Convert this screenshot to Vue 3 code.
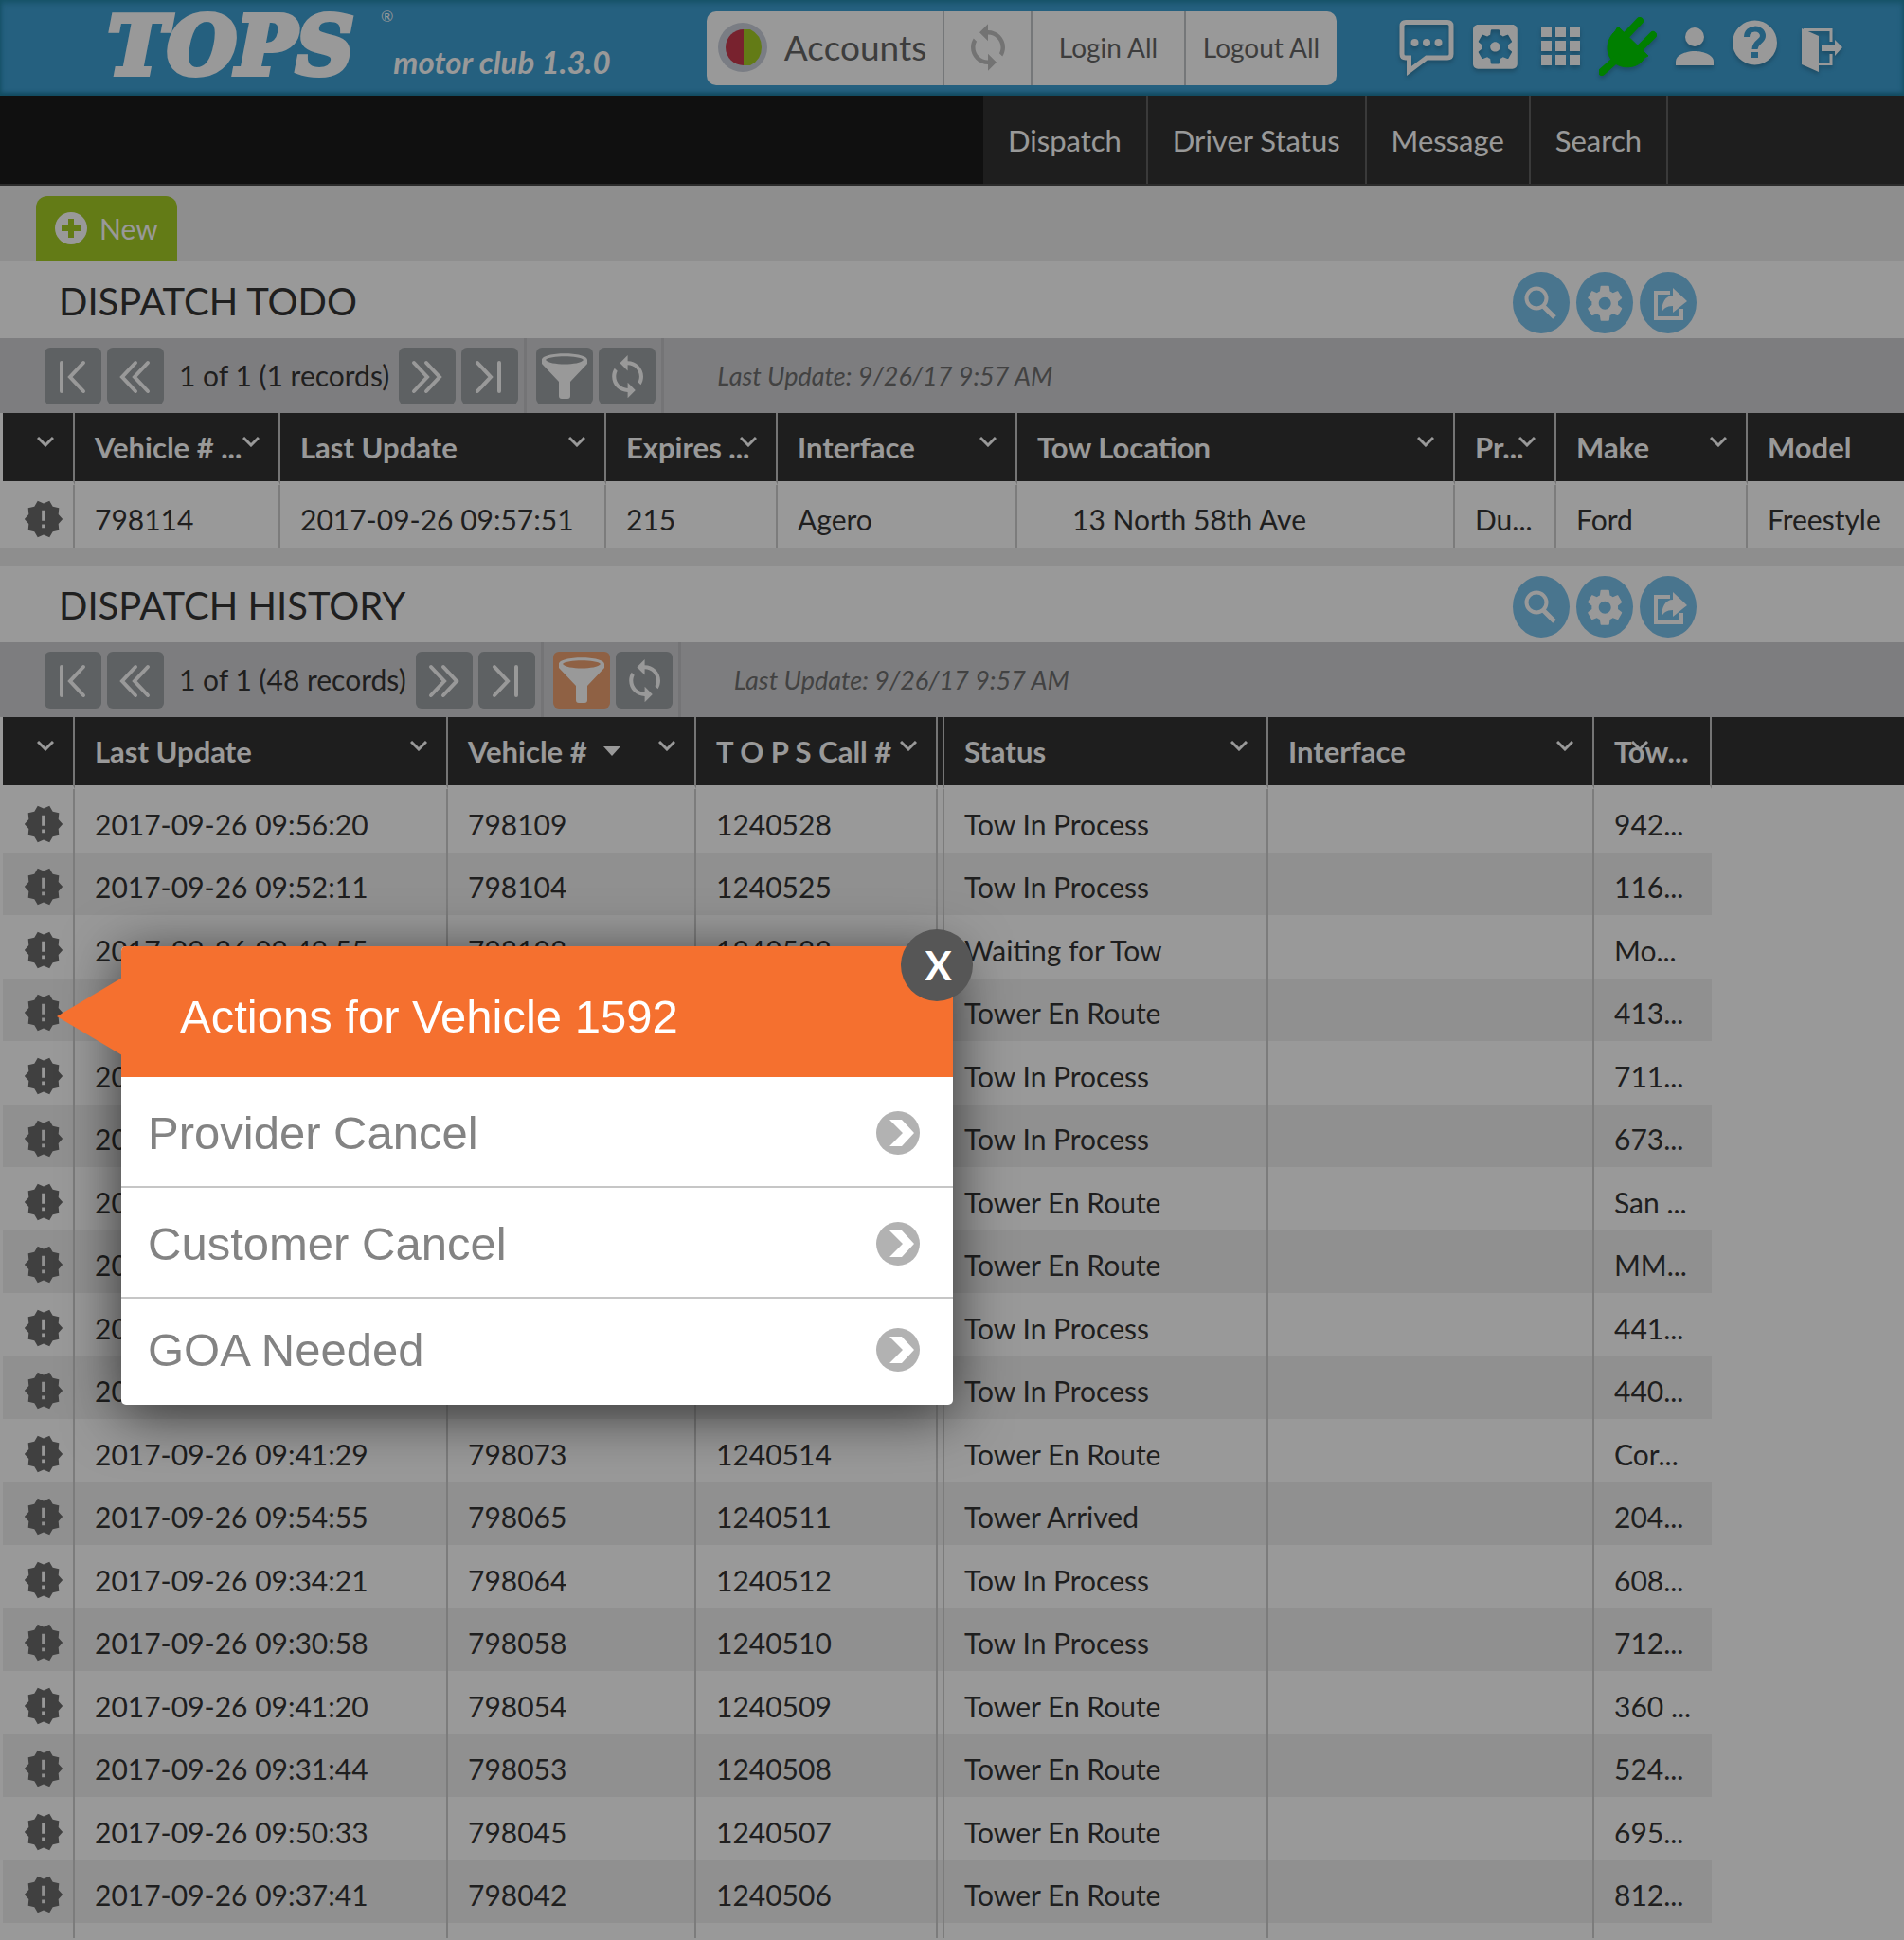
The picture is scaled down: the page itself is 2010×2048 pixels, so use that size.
<script setup>
const navItems = ['Dispatch', 'Driver Status', 'Message', 'Search']

const todoColumns = [
  { label: '', width: 76, menu: true },
  { label: 'Vehicle # ...', width: 217, menu: true },
  { label: 'Last Update', width: 344, menu: true },
  { label: 'Expires ...', width: 181, menu: true },
  { label: 'Interface', width: 253, menu: true },
  { label: 'Tow Location', width: 462, menu: true },
  { label: 'Pr...', width: 107, menu: true },
  { label: 'Make', width: 202, menu: true },
  { label: 'Model', width: 0 },
]

const todoRows = [
  ['798114', '2017-09-26 09:57:51', '215', 'Agero', '13 North 58th Ave', 'Du...', 'Ford', 'Freestyle'],
]

const historyColumns = [
  { label: '', width: 76, menu: true },
  { label: 'Last Update', width: 394, menu: true },
  { label: 'Vehicle #', width: 262, menu: true, sorted: true },
  { label: 'T O P S Call #', width: 255, menu: true },
  { label: '', width: 7 },
  { label: 'Status', width: 342, menu: true },
  { label: 'Interface', width: 344, menu: true },
  { label: 'Tow...', width: 124, menu: true, tight: true },
  { label: '', width: 0 },
]

const historyRows = [
  ['2017-09-26 09:56:20', '798109', '1240528', 'Tow In Process', '942...'],
  ['2017-09-26 09:52:11', '798104', '1240525', 'Tow In Process', '116...'],
  ['2017-09-26 09:49:55', '798103', '1240523', 'Waiting for Tow', 'Mo...'],
  ['2017-09-26 09:48:12', '798099', '1240522', 'Tower En Route', '413...'],
  ['2017-09-26 09:47:36', '798095', '1240521', 'Tow In Process', '711...'],
  ['2017-09-26 09:46:08', '798091', '1240520', 'Tow In Process', '673...'],
  ['2017-09-26 09:45:27', '798088', '1240519', 'Tower En Route', 'San ...'],
  ['2017-09-26 09:44:51', '798084', '1240518', 'Tower En Route', 'MM...'],
  ['2017-09-26 09:43:19', '798080', '1240517', 'Tow In Process', '441...'],
  ['2017-09-26 09:42:40', '798076', '1240515', 'Tow In Process', '440...'],
  ['2017-09-26 09:41:29', '798073', '1240514', 'Tower En Route', 'Cor...'],
  ['2017-09-26 09:54:55', '798065', '1240511', 'Tower Arrived', '204...'],
  ['2017-09-26 09:34:21', '798064', '1240512', 'Tow In Process', '608...'],
  ['2017-09-26 09:30:58', '798058', '1240510', 'Tow In Process', '712...'],
  ['2017-09-26 09:41:20', '798054', '1240509', 'Tower En Route', '360 ...'],
  ['2017-09-26 09:31:44', '798053', '1240508', 'Tower En Route', '524...'],
  ['2017-09-26 09:50:33', '798045', '1240507', 'Tower En Route', '695...'],
  ['2017-09-26 09:37:41', '798042', '1240506', 'Tower En Route', '812...'],
].map(([updated, vehicle, call, status, tow]) => [updated, vehicle, call, '', status, '', tow])

const panels = [
  { id: 'todo', title: 'DISPATCH TODO', paging: '1 of 1 (1 records)', columns: todoColumns, rows: todoRows, filtered: false },
  { id: 'history', title: 'DISPATCH HISTORY', paging: '1 of 1 (48 records)', columns: historyColumns, rows: historyRows, filtered: true },
]

const actions = ['Provider Cancel', 'Customer Cancel', 'GOA Needed']

const syncPath = 'M12 4V1L8 5l4 4V6c3.31 0 6 2.69 6 6 0 1.01-.25 1.97-.7 2.8l1.46 1.46C19.54 15.03 20 13.57 20 12c0-4.42-3.58-8-8-8zm0 14c-3.31 0-6-2.69-6-6 0-1.01.25-1.97.7-2.8L5.24 7.74C4.46 8.97 4 10.43 4 12c0 4.42 3.58 8 8 8v3l4-4-4-4v3z'
const gearPath = 'M19.43 12.98c.04-.32.07-.64.07-.98s-.03-.66-.07-.98l2.11-1.65c.19-.15.24-.42.12-.64l-2-3.46c-.12-.22-.39-.3-.61-.22l-2.49 1c-.52-.4-1.08-.73-1.69-.98l-.38-2.65C14.46 2.18 14.25 2 14 2h-4c-.25 0-.46.18-.49.42l-.38 2.65c-.61.25-1.17.59-1.69.98l-2.49-1c-.23-.09-.49 0-.61.22l-2 3.46c-.13.22-.07.49.12.64l2.11 1.65c-.04.32-.07.65-.07.98s.03.66.07.98l-2.11 1.65c-.19.15-.24.42-.12.64l2 3.46c.12.22.39.3.61.22l2.49-1c.52.4 1.08.73 1.69.98l.38 2.65c.03.24.24.42.49.42h4c.25 0 .46-.18.49-.42l.38-2.65c.61-.25 1.17-.59 1.69-.98l2.49 1c.23.09.49 0 .61-.22l2-3.46c.12-.22.07-.49-.12-.64l-2.11-1.65zM12 15.5c-1.93 0-3.5-1.57-3.5-3.5s1.57-3.5 3.5-3.5 3.5 1.57 3.5 3.5-1.57 3.5-3.5 3.5z'
const gearBoxPath = 'M12 10c-1.1 0-2 .9-2 2s.9 2 2 2 2-.9 2-2-.9-2-2-2zm7-7H5c-1.11 0-2 .9-2 2v14c0 1.1.89 2 2 2h14c1.11 0 2-.9 2-2V5c0-1.1-.89-2-2-2zm-1.75 9c0 .23-.02.46-.05.68l1.48 1.16c.13.11.17.3.08.45l-1.4 2.42c-.09.15-.27.21-.43.15l-1.74-.7c-.36.28-.76.51-1.18.69l-.26 1.85c-.03.17-.18.3-.35.3h-2.8c-.17 0-.32-.13-.35-.29l-.26-1.85c-.43-.18-.82-.41-1.18-.69l-1.74.7c-.16.06-.34 0-.43-.15l-1.4-2.42c-.09-.15-.05-.34.08-.45l1.48-1.16c-.03-.23-.05-.46-.05-.69 0-.23.02-.46.05-.68l-1.48-1.16c-.13-.11-.17-.3-.08-.45l1.4-2.42c.09-.15.27-.21.43-.15l1.74.7c.36-.28.76-.51 1.18-.69l.26-1.85c.03-.17.18-.3.35-.3h2.8c.17 0 .32.13.35.29l.26 1.85c.43.18.82.41 1.18.69l1.74-.7c.16-.06.34 0 .43.15l1.4 2.42c.09.15.05.34-.08.45l-1.48 1.16c.03.23.05.46.05.69z'
const badgePath = 'M23 12l-2.44-2.78.34-3.68-3.61-.82-1.89-3.18L12 3 8.6 1.54 6.71 4.72l-3.61.81.34 3.68L1 12l2.44 2.78-.34 3.69 3.61.82 1.89 3.18L12 21l3.4 1.46 1.89-3.18 3.61-.82-.34-3.68L23 12zm-10 5h-2v-2h2v2zm0-4h-2V7h2v6z'
</script>

<template>
  <div class="app">
    <header class="topbar">
      <div class="brand">
        <span class="logo">TOPS</span><sup class="reg">®</sup>
        <span class="product">motor club 1.3.0</span>
      </div>

      <div class="accounts">
        <button type="button" class="account-main">
          <svg width="52" height="52" viewBox="0 0 52 52" aria-hidden="true">
            <circle cx="26" cy="26" r="26" fill="#cbd1dd" />
            <path d="M27 7A19 19 0 0 0 27 45z" fill="#c9394d" />
            <path d="M27 7h7q12 6 12 19t-12 19h-7z" fill="#a5cd26" />
          </svg>
          Accounts
        </button>
        <button type="button" class="account-sync" aria-label="Refresh accounts">
          <svg width="54" height="54" viewBox="0 0 24 24"><path :d="syncPath" /></svg>
        </button>
        <button type="button" class="account-login">Login All</button>
        <button type="button" class="account-logout">Logout All</button>
      </div>

      <div class="tools">
        <button type="button" aria-label="Messages">
          <svg width="58" height="62" viewBox="0 0 58 62">
            <path d="M7 5.500H51q4 0 4 4V39q0 4-4 4H29L10.500 57V43H7q-4 0-4-4V9.500q0-4 4-4z" fill="none" stroke="#fff" stroke-width="5" />
            <circle cx="16.500" cy="27" r="4" /><circle cx="29" cy="27" r="4" /><circle cx="41.500" cy="27" r="4" />
          </svg>
        </button>
        <button type="button" aria-label="Settings">
          <svg width="47" height="62" viewBox="0 0 47 62"><path transform="translate(-7.800 .200) scale(2.600)" :d="gearBoxPath" /></svg>
        </button>
        <button type="button" aria-label="Applications">
          <svg width="46" height="62" viewBox="0 0 46 62">
            <path d="M5 10h11v11H5zM20 10h11v11H20zM35 10h11v11H35zM5 25h11v11H5zM20 25h11v11H20zM35 25h11v11H35zM5 40h11v11H5zM20 40h11v11H20zM35 40h11v11H35z" />
          </svg>
        </button>
        <button type="button" aria-label="Connection">
          <svg class="plug" width="61" height="62" viewBox="0 0 61 62">
            <path d="M20 10L52 41L48 43C42 55 22 56 14 46C6 37 8 23 17 15z" />
            <path d="M28 20L43 4M42 34L57 19M20 43L3 58" fill="none" stroke-width="8" stroke-linecap="round" />
          </svg>
        </button>
        <button type="button" aria-label="Profile">
          <svg width="40" height="62" viewBox="0 0 40 62"><circle cx="20" cy="21" r="10" /><path d="M0 51V47C0 39 13 36 20 36S40 39 40 47V51z" /></svg>
        </button>
        <button type="button" aria-label="Help">
          <svg width="47" height="62" viewBox="0 0 47 62">
            <circle cx="23.500" cy="27" r="23.500" />
            <path d="M15 21C15 10 32 10 32 20C32 26 23.500 26 23.500 34" fill="none" stroke="#3ea0d4" stroke-width="6" />
            <path d="M20 37h7v6h-7z" fill="#3ea0d4" />
          </svg>
        </button>
        <button type="button" aria-label="Exit">
          <svg width="49" height="62" viewBox="0 0 49 62">
            <path d="M6 12L24 20V58L6 50zM27 29H41V24L49 32L41 41V36H27z" />
            <path d="M8 13.500H37V26M37 39V49.500H24" fill="none" stroke="#fff" stroke-width="3" />
          </svg>
        </button>
      </div>
    </header>

    <nav class="nav">
      <ul>
        <li v-for="item in navItems" :key="item"><a href="#">{{ item }}</a></li>
      </ul>
    </nav>

    <div class="tabs">
      <button type="button" class="new">
        <svg width="34" height="34" viewBox="0 0 34 34" aria-hidden="true">
          <circle cx="17" cy="17" r="17" fill="#fff" />
          <path d="M17 7V27M7 17H27" stroke="#a5cd26" stroke-width="6" />
        </svg>
        New
      </button>
    </div>

    <section v-for="panel in panels" :key="panel.id" class="panel" :class="panel.id">
      <div class="panel-head">
        <h2>{{ panel.title }}</h2>
        <div class="rounds">
          <button type="button" aria-label="Search">
            <svg width="60" height="65" viewBox="0 0 60 65"><circle cx="25" cy="28" r="10.500" /><path d="M32 36L44 48" stroke-width="5" /></svg>
          </button>
          <button type="button" aria-label="Settings">
            <svg width="60" height="65" viewBox="0 0 60 65"><path class="solid" transform="translate(8 11) scale(1.850)" :d="gearPath" /></svg>
          </button>
          <button type="button" aria-label="Share">
            <svg width="60" height="65" viewBox="0 0 60 65">
              <path d="M32 22H17V49H44V39" />
              <path class="solid" d="M35 17L50 31L35 43V36C28 36 25 39 23 43C23 33 27 25 35 25z" />
            </svg>
          </button>
        </div>
      </div>

      <div class="toolbar">
        <button type="button" aria-label="First page"><svg width="60" height="60" viewBox="0 0 60 60"><path d="M18 16V46M41 16L27 31L41 46" /></svg></button>
        <button type="button" aria-label="Previous page"><svg width="60" height="60" viewBox="0 0 60 60"><path d="M30 16L16 31L30 46M43 16L29 31L43 46" /></svg></button>
        <span class="paging">{{ panel.paging }}</span>
        <button type="button" aria-label="Next page"><svg width="60" height="60" viewBox="0 0 60 60"><path d="M16 16L30 31L16 46M29 16L43 31L29 46" /></svg></button>
        <button type="button" aria-label="Last page"><svg width="60" height="60" viewBox="0 0 60 60"><path d="M17 16L31 31L17 46M40 16V46" /></svg></button>
        <span class="group">
          <button type="button" aria-label="Filter" :class="{ active: panel.filtered }">
            <svg width="60" height="60" viewBox="0 0 60 60">
              <path class="solid" fill-rule="evenodd" d="M6 13C6 4 54 4 54 13V17L36 36V51Q36 54 33 54H27Q24 54 24 51V36L6 17zM10 13C14 19 46 19 50 13C46 8 14 8 10 13z" />
            </svg>
          </button>
          <button type="button" aria-label="Refresh"><svg width="60" height="60" viewBox="0 0 60 60"><path class="solid" transform="translate(6 6) scale(2.050)" :d="syncPath" /></svg></button>
        </span>
        <em class="updated">Last Update: 9/26/17 9:57 AM</em>
      </div>

      <table>
        <colgroup>
          <col v-for="(col, i) in panel.columns" :key="i" :style="col.width ? { width: col.width + 'px' } : null" />
        </colgroup>
        <thead>
          <tr>
            <th v-for="(col, i) in panel.columns" :key="i" scope="col">
              <div class="th" :class="{ tight: col.tight }">
                <span>{{ col.label }}</span>
                <svg v-if="col.sorted" class="sorted" width="18" height="10" viewBox="0 0 18 10" aria-hidden="true"><path d="M0 0H18L9 10z" fill="#fff" /></svg>
                <button v-if="col.menu" type="button" class="menu" :aria-label="'Column menu ' + col.label">
                  <svg width="18" height="11" viewBox="0 0 18 11"><path d="M1 1L9 9L17 1" fill="none" stroke="#fff" stroke-width="3" /></svg>
                </button>
              </div>
            </th>
          </tr>
        </thead>
        <tbody>
          <tr v-for="(row, r) in panel.rows" :key="r">
            <td class="badge">
              <button type="button" aria-label="Actions"><svg width="44" height="44" viewBox="0 0 24 24"><path :d="badgePath" /></svg></button>
            </td>
            <td v-for="(cell, c) in row" :key="c">{{ cell }}</td>
            <td v-if="panel.id === 'history'" class="rest"></td>
          </tr>
          <tr v-if="panel.id === 'history'" class="tail">
            <td v-for="(col, i) in panel.columns" :key="i" :class="{ rest: !col.width }"></td>
          </tr>
        </tbody>
      </table>
    </section>

    <div class="backdrop"></div>

    <div class="dialog" role="dialog" aria-labelledby="dialog-title">
      <h3 id="dialog-title">Actions for Vehicle 1592</h3>
      <ul>
        <li v-for="action in actions" :key="action">
          <button type="button">
            {{ action }}
            <svg width="46" height="46" viewBox="0 0 46 46" aria-hidden="true"><circle cx="23" cy="23" r="23" fill="#b2b2b2" /><path d="M14 9H27L40 23L27 37H14L28 23z" fill="#fff" /></svg>
          </button>
        </li>
      </ul>
      <button type="button" class="close" aria-label="Close">X</button>
    </div>
  </div>
</template>

<style>
body {
  margin: 0;
}
</style>

<style scoped>
.app {
  position: relative;
  min-height: 100vh;
  overflow: hidden;
  background: #fff;
  color: #353535;
  font-family: Lato, "Liberation Sans", sans-serif;
  font-size: 30px;
  line-height: 36px;
}
.app *,
.app {
  box-sizing: border-box;
}
button {
  margin: 0;
  padding: 0;
  border: 0;
  background: none;
  color: inherit;
  font: inherit;
  cursor: pointer;
}
svg {
  display: block;
  flex: none;
}
ul {
  margin: 0;
  padding: 0;
  list-style: none;
}

.topbar {
  display: flex;
  align-items: center;
  height: 101px;
  padding-right: 65px;
  background: #3ea0d4;
  box-shadow: inset 0 3px 6px #2287a8, inset 0 -3px 4px #1c7a9c;
  color: #fff;
}
.brand {
  display: flex;
  align-items: baseline;
  width: 746px;
  padding: 0 0 4px 114px;
  white-space: nowrap;
}
.logo {
  min-width: 288px;
  font: italic 900 84px/96px "DejaVu Serif", serif;
  -webkit-text-stroke: 6px #fff;
}
.reg {
  align-self: flex-start;
  font-size: 16px;
  line-height: 32px;
}
.product {
  font-size: 33px;
  font-style: italic;
  font-weight: 700;
}
.accounts {
  display: flex;
  height: 78px;
  overflow: hidden;
  border-radius: 10px;
  background: #fff;
  color: #666;
}
.accounts button {
  display: flex;
  align-items: center;
  justify-content: center;
  padding-bottom: 2px;
  font-size: 28px;
}
.accounts button + button {
  border-left: 2px solid #c4c6ca;
}
.accounts .account-main {
  gap: 18px;
  width: 249px;
  padding-right: 5px;
  font-size: 37px;
}
.account-sync {
  width: 93px;
}
.account-sync path {
  fill: #c0c0c0;
}
.account-login {
  width: 162px;
}
.account-logout {
  width: 161px;
}
.tools {
  display: flex;
  gap: 20px;
  margin-left: auto;
  padding-bottom: 4px;
}
.tools svg {
  fill: #fff;
  filter: drop-shadow(0 3px 2px rgba(0, 0, 0, 0.2));
}
.tools .plug {
  fill: #00d400;
  stroke: #00d400;
}

.nav {
  padding-left: 1038px;
  border-bottom: 2px solid #4a4a4a;
  background: #1b1b1b;
}
.nav ul {
  display: flex;
  background: #323232;
}
.nav a {
  display: block;
  padding: 29px 26px 28px;
  border-right: 2px solid #616161;
  color: #fff;
  font-size: 31px;
  text-decoration: none;
}

.tabs {
  padding: 11px 38px 0;
  background: #ededed;
}
.new {
  display: flex;
  align-items: center;
  gap: 13px;
  height: 69px;
  padding: 0 20px 2px;
  border-radius: 12px 12px 0 0;
  background: #a5cd26;
  color: #fff;
}

.panel {
  background: #fff;
}
.todo {
  border-bottom: 19px solid #ededed;
}
.panel-head {
  display: flex;
  align-items: center;
  justify-content: space-between;
  height: 81px;
  padding: 6px 219px 0 62px;
}
h2 {
  margin: 0 0 4px;
  font-size: 40px;
  font-weight: 400;
  line-height: 48px;
}
.rounds {
  display: flex;
  gap: 7px;
}
.rounds button {
  border-radius: 50%;
  background: #7bc3ed;
}
.rounds svg {
  fill: none;
  stroke: #fff;
  stroke-width: 4px;
}
.rounds .solid,
.toolbar .solid {
  fill: #fff;
  stroke: none;
}

.toolbar {
  display: flex;
  align-items: center;
  gap: 6px;
  height: 79px;
  padding-left: 47px;
  background: #d1d1d4;
}
.toolbar button {
  border-radius: 6px;
  background: #9da2a5;
}
.toolbar .active {
  background: #eea272;
}
.toolbar svg {
  fill: none;
  stroke: #fff;
  stroke-width: 4px;
  stroke-linecap: round;
}
.paging {
  padding: 0 4px 2px 10px;
  white-space: nowrap;
}
.group {
  display: flex;
  align-items: center;
  gap: 6px;
  height: 100%;
  padding: 0 6px 0 10px;
  border: solid #c2c2c5;
  border-width: 0 3px;
}
.updated {
  padding-left: 50px;
  color: #6e6e6e;
  font-size: 27px;
}

table {
  width: calc(100% - 3px);
  margin-left: 3px;
  border-spacing: 0;
  table-layout: fixed;
}
th,
td {
  padding: 0;
  overflow: hidden;
  border-right: 2px solid #cfcfcf;
  text-align: left;
  white-space: nowrap;
}
thead th {
  height: 76px;
  border-bottom: 4px solid #fff;
  border-right-color: #c4c4c4;
  background: #323232;
  background-clip: padding-box;
  color: #fff;
  font-size: 31px;
  font-weight: 700;
}
th:last-child,
td:last-child {
  border-right: 0;
}
.th {
  display: flex;
  position: relative;
  align-items: center;
  height: 72px;
  padding-left: 21px;
}
.sorted {
  margin-left: 17px;
}
.menu {
  position: absolute;
  top: 25px;
  right: 20px;
}
.tight .menu {
  right: 65px;
}
td {
  height: 66px;
  padding: 6px 0 0 21px;
}
.history tr:nth-child(odd) td {
  height: 67px;
}
.history tr:nth-child(even) td:not(.rest) {
  background: #f1f1f1;
}
.history td:nth-child(8) {
  border-right: 0;
}
.history tr.tail td {
  height: 16px;
  padding: 0;
}
.todo td:nth-child(6) {
  padding-left: 58px;
}
.badge path {
  fill: #6c6c6c;
}
.badge button {
  display: block;
}

.backdrop {
  position: absolute;
  inset: 0;
  background: rgba(0, 0, 0, 0.4);
}
.dialog {
  position: absolute;
  top: 999px;
  left: 128px;
  width: 878px;
  border-radius: 5px;
  background: #fff;
  box-shadow: 0 10px 60px rgba(0, 0, 0, 0.65);
  color: #838383;
  font: 49px/56px "Liberation Sans", Arial, sans-serif;
}
.dialog h3 {
  margin: 0;
  padding: 46px 62px 36px;
  border-radius: 5px 5px 0 0;
  background: #f5702f;
  color: #fff;
  font-size: 49px;
  font-weight: 400;
}
.dialog h3::before {
  content: "";
  position: absolute;
  top: 33px;
  left: -68px;
  border: solid transparent;
  border-width: 41px 69px 41px 0;
  border-right-color: #f5702f;
}
.dialog li + li {
  border-top: 2px solid #c6c6c6;
}
.dialog li button {
  display: flex;
  align-items: center;
  justify-content: space-between;
  width: 100%;
  height: 115px;
  padding: 3px 35px 0 28px;
}
.dialog li:last-child button {
  height: 112px;
  padding: 0 35px 4px 28px;
}
.dialog .close {
  position: absolute;
  top: -18px;
  right: -21px;
  width: 76px;
  height: 76px;
  padding-left: 3px;
  border-radius: 50%;
  background: #565656;
  color: #fff;
  font: 700 42px/74px Lato, sans-serif;
}
</style>
